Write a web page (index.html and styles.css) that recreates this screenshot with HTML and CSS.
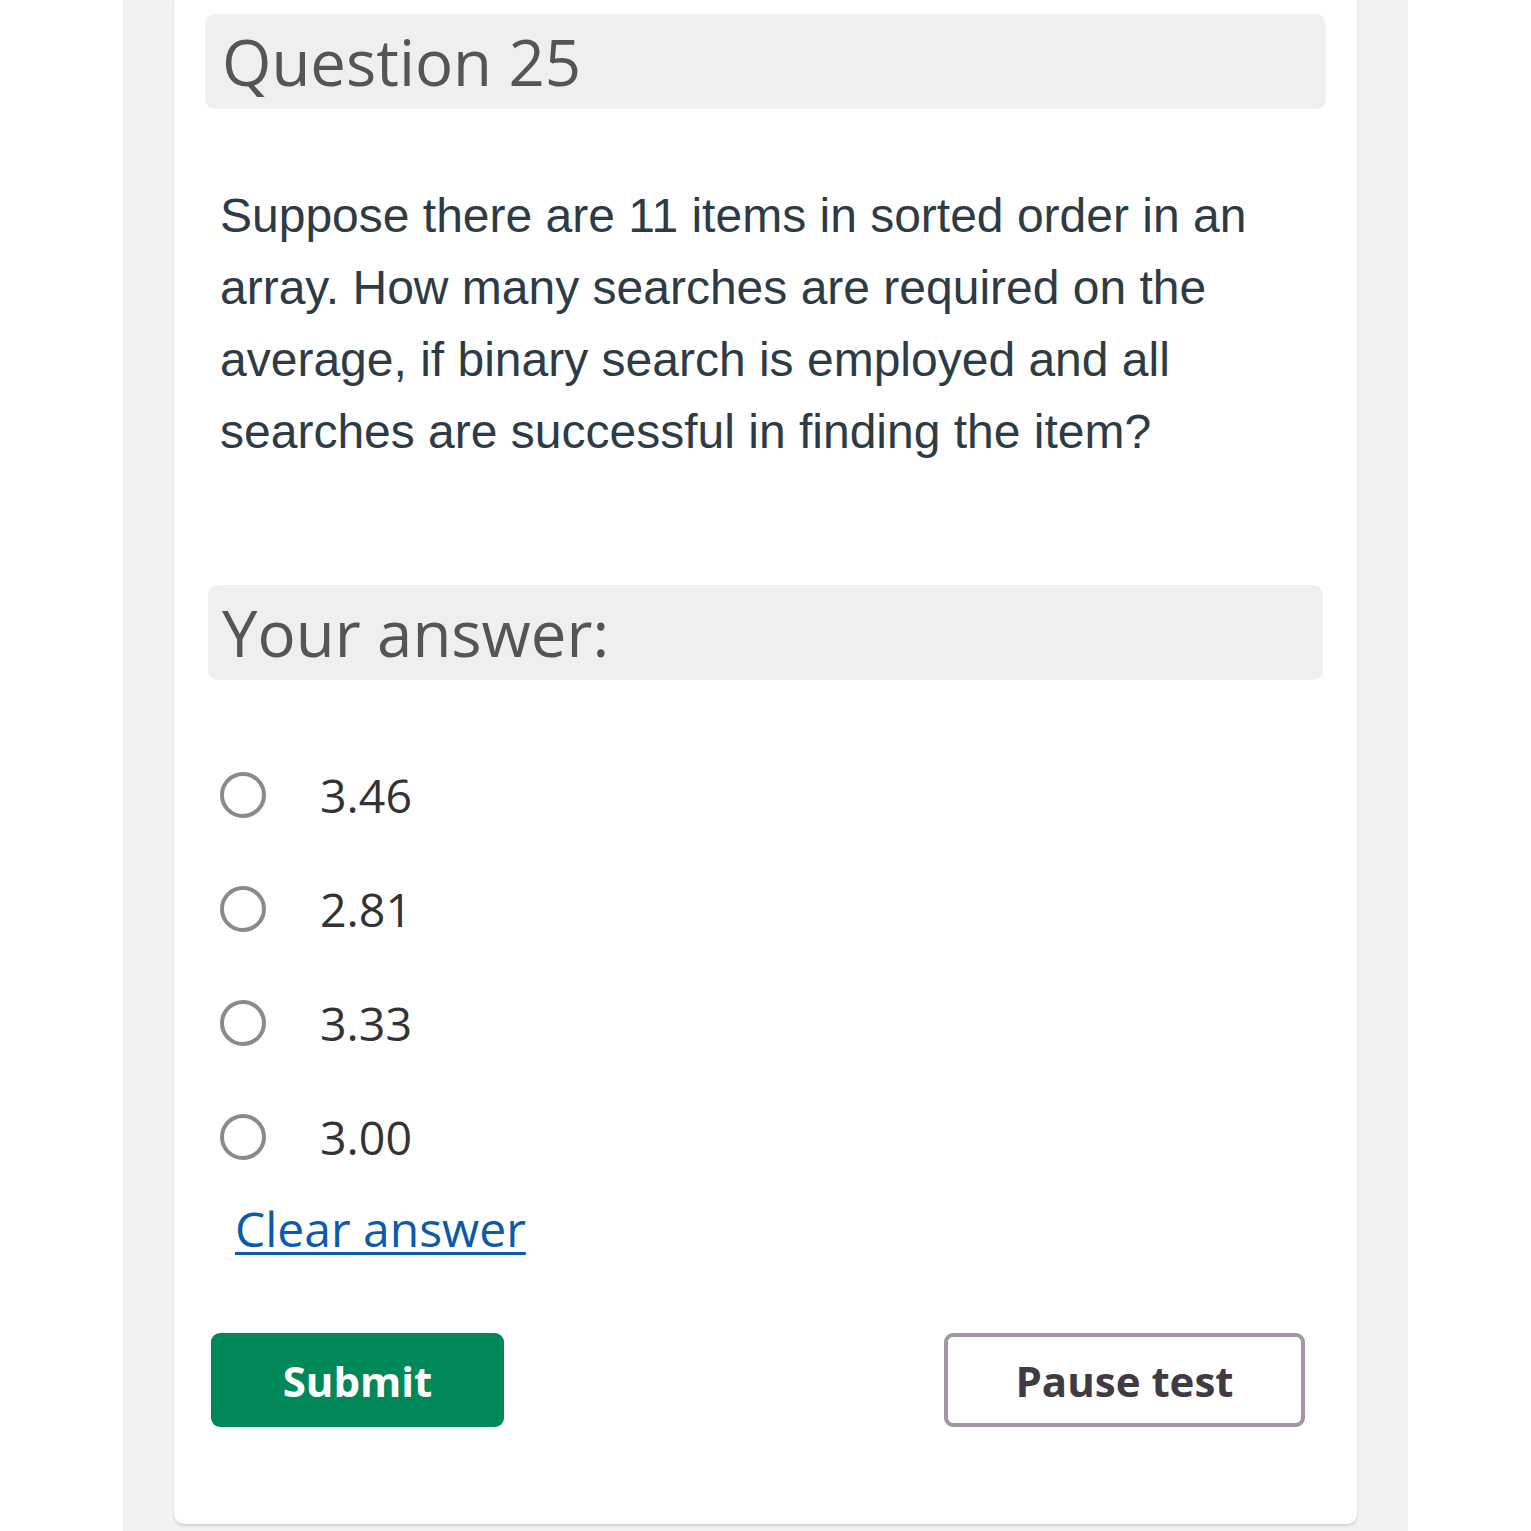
FILE: index.html
```html
<!DOCTYPE html>
<html lang="en">
<head>
<meta charset="UTF-8">
<meta name="viewport" content="width=device-width, initial-scale=1.0">
<title>Question 25</title>
<link rel="stylesheet" href="styles.css">
</head>
<body>
<div class="page">
    <div class="card">
        <h2 class="section-title question-title">Question 25</h2>
        <p class="question-text">Suppose there are 11 items in sorted order in an array. How many searches are required on the average, if binary search is employed and all searches are successful in finding the item?</p>
        <h2 class="section-title answer-title">Your answer:</h2>
        <form class="answers">
            <label class="option"><input type="radio" name="answer" value="a"><span class="radio"></span><span class="option-text">3.46</span></label>
            <label class="option"><input type="radio" name="answer" value="b"><span class="radio"></span><span class="option-text">2.81</span></label>
            <label class="option"><input type="radio" name="answer" value="c"><span class="radio"></span><span class="option-text">3.33</span></label>
            <label class="option"><input type="radio" name="answer" value="d"><span class="radio"></span><span class="option-text">3.00</span></label>
        </form>
        <a href="#" class="clear-link">Clear answer</a>
        <div class="actions">
            <button type="button" class="btn btn-submit">Submit</button>
            <button type="button" class="btn btn-pause">Pause test</button>
        </div>
    </div>
</div>
</body>
</html>
```
FILE: styles.css
```css
body {
    margin: 0;
    padding: 0;
    background-color: #fff;
    font-family: "Open Sans", sans-serif;
}
.page {
    width: 1183px;
    margin-left: 123px;
    padding: 0 51px 8px 51px;
    background-color: #f2f2f2;
}
.card {
    background-color: #fff;
    border-radius: 0 0 10px 10px;
    box-shadow: 0 2px 3px rgba(0, 0, 0, 0.14);
    padding: 14px 31px 97px 31px;
}
.section-title {
    margin: 0;
    background-color: #efefef;
    border-radius: 10px;
    color: #555;
    font-weight: normal;
    font-size: 63.5px;
    height: 95px;
    line-height: 95px;
    padding-left: 17px;
}
.answer-title {
    margin: 0 3px;
    padding-left: 14px;
}
.question-text {
    margin: 71px 0 117px 15px;
    font-family: "Liberation Sans", Arial, sans-serif;
    font-size: 48px;
    line-height: 72px;
    color: #2d3b45;
    max-width: 1080px;
}
.answers {
    margin-top: 58px;
}
.option {
    display: flex;
    align-items: center;
    height: 114px;
    padding-left: 15px;
    cursor: pointer;
}
.option input {
    display: none;
}
.radio {
    width: 38px;
    height: 38px;
    border: 4px solid #8a8a8a;
    border-radius: 50%;
    flex-shrink: 0;
}
.option-text {
    margin-left: 54px;
    font-size: 46.5px;
    color: #333;
}
.clear-link {
    display: inline-block;
    margin: 3px 0 0 30px;
    font-size: 48px;
    line-height: 64px;
    color: #0b5aab;
    text-decoration: underline;
    text-decoration-thickness: 3px;
    text-underline-offset: 5px;
}
.actions {
    display: flex;
    justify-content: space-between;
    margin: 72px 21px 0 6px;
}
.btn {
    height: 94px;
    font-family: "Open Sans", sans-serif;
    font-weight: bold;
    font-size: 42px;
    border-radius: 9px;
    cursor: pointer;
}
.btn-submit {
    width: 293px;
    background-color: #008858;
    color: #fff;
    border: none;
}
.btn-pause {
    width: 361px;
    background-color: #fff;
    color: #403a42;
    border: 4px solid #a396a4;
}
```
